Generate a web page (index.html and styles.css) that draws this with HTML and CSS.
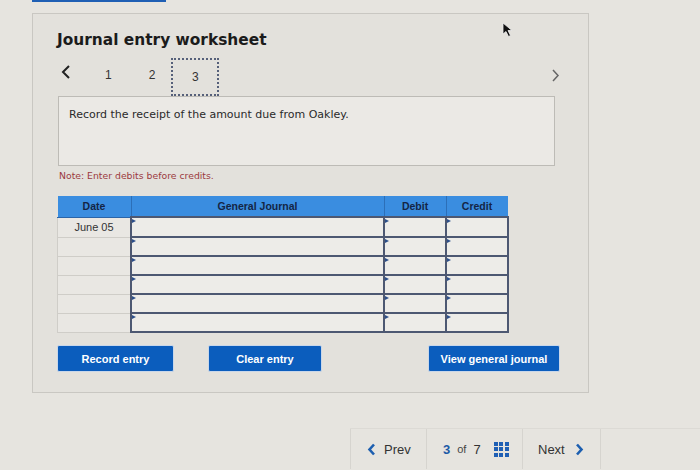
FILE: index.html
```html
<!DOCTYPE html>
<html>
<head>
<meta charset="utf-8">
<link rel="stylesheet" href="styles.css">
</head>
<body>
<div class="topbar"></div>
<div class="panel">
  <h1 class="title">Journal entry worksheet</h1>
  <div class="tabs">
    <svg class="chev-left" width="10" height="14" viewBox="0 0 10 14"><polyline points="8,1 2,7 8,13" fill="none" stroke="#222" stroke-width="2"/></svg>
    <span class="tab tab1">1</span>
    <span class="tab tab2">2</span>
    <span class="tab tab3">3</span>
    <svg class="chev-right" width="9" height="13" viewBox="0 0 9 13"><polyline points="2,1 7,6.5 2,12" fill="none" stroke="#666" stroke-width="1.5"/></svg>
  </div>
  <div class="prompt">Record the receipt of the amount due from Oakley.</div>
  <div class="note">Note: Enter debits before credits.</div>
  <table class="journal">
    <thead>
      <tr><th class="c-date">Date</th><th class="c-gj">General Journal</th><th class="c-deb">Debit</th><th class="c-cred">Credit</th></tr>
    </thead>
    <tbody>
      <tr class="first"><td class="date">June 05</td><td class="in"></td><td class="in"></td><td class="in"></td></tr>
      <tr><td class="date"></td><td class="in"></td><td class="in"></td><td class="in"></td></tr>
      <tr><td class="date"></td><td class="in"></td><td class="in"></td><td class="in"></td></tr>
      <tr><td class="date"></td><td class="in"></td><td class="in"></td><td class="in"></td></tr>
      <tr><td class="date"></td><td class="in"></td><td class="in"></td><td class="in"></td></tr>
      <tr><td class="date"></td><td class="in"></td><td class="in"></td><td class="in"></td></tr>
    </tbody>
  </table>
  <div class="actions">
    <button class="btn btn-record">Record entry</button>
    <button class="btn btn-clear">Clear entry</button>
    <button class="btn btn-view">View general journal</button>
  </div>
</div>
<div class="footer">
  <div class="fcell prev">
    <svg width="9" height="13" viewBox="0 0 9 13"><polyline points="7,1.5 2.5,6.5 7,11.5" fill="none" stroke="#1d5fb0" stroke-width="2.6"/></svg>
    <span>Prev</span>
  </div>
  <div class="fcell pages">
    <span class="cur">3</span><span class="of">of</span><span class="tot">7</span>
    <span class="grid"><i></i><i></i><i></i><i></i><i></i><i></i><i></i><i></i><i></i></span>
  </div>
  <div class="fcell next">
    <span>Next</span>
    <svg width="9" height="13" viewBox="0 0 9 13"><polyline points="2,1.5 6.5,6.5 2,11.5" fill="none" stroke="#1d5fb0" stroke-width="2.6"/></svg>
  </div>
  <div class="fcell last"></div>
</div>
<svg class="cursor" width="12" height="16" viewBox="0 0 12 16"><path d="M1 1 L1 12 L4 9.5 L6.5 14.5 L8.5 13.5 L6 8.5 L10 8.5 Z" fill="#111" stroke="#eee" stroke-width="0.8"/></svg>
</body>
</html>
```

FILE: styles.css
```css
html, body {
  margin: 0;
  padding: 0;
}
body {
  width: 700px;
  height: 470px;
  background: #e6e4df;
  font-family: "Liberation Sans", Arial, sans-serif;
  position: relative;
  overflow: hidden;
}
.topbar {
  margin-left: 32px;
  width: 134px;
  height: 2px;
  background: #1f5fb4;
}
.panel {
  margin: 11px 0 0 32px;
  width: 557px;
  height: 380px;
  border: 1px solid #c9c7c2;
  background: #e3e1dc;
  padding: 0 0 0 24px;
  box-sizing: border-box;
  display: flex;
  flex-direction: column;
}
.title {
  margin: 16px 0 0 0;
  font-family: "DejaVu Sans", Verdana, sans-serif;
  font-weight: bold;
  font-size: 15.4px;
  line-height: 20px;
  color: #1b1b1b;
}
.tabs {
  display: flex;
  align-items: flex-start;
  height: 38px;
  margin-top: 8px;
  position: relative;
}
.chev-left {
  margin-left: 4px;
  margin-top: 7px;
}
.tab {
  font-size: 12px;
  line-height: 14px;
  color: #333;
  text-align: center;
  margin-top: 10px;
}
.tab1 { margin-left: 34px; }
.tab2 { margin-left: 37px; }
.tab3 {
  margin-left: 16px;
  margin-top: 0;
  width: 48px;
  height: 38px;
  padding-top: 10px;
  box-sizing: border-box;
  border: 2px dotted #56607a;
}
.chev-right {
  margin-left: auto;
  margin-right: 28px;
  margin-top: 11px;
}
.prompt {
  margin-left: 1px;
  width: 497px;
  height: 70px;
  box-sizing: border-box;
  border: 1px solid #bdbbb6;
  background: #ebe9e5;
  padding: 11px 0 0 10px;
  font-family: "DejaVu Sans", Verdana, sans-serif;
  font-size: 11px;
  color: #2a2a2a;
}
.note {
  margin: 4px 0 0 2px;
  font-family: "DejaVu Sans", Verdana, sans-serif;
  font-size: 9.3px;
  color: #9b3a3f;
  line-height: 12px;
}
.journal {
  margin: 14px 0 0 0;
  border-collapse: collapse;
  table-layout: fixed;
  width: 447px;
}
.journal th {
  background: #3a8de0;
  color: #142545;
  font-size: 10.5px;
  font-weight: bold;
  height: 20px;
  padding: 0;
  border-left: 1px solid #2c6fb8;
  border-bottom: 1px solid #2a64a8;
}
.journal th:first-child { border-left: none; }
.c-date { width: 73px; }
.c-gj { width: 252px; }
.c-deb { width: 61px; }
.c-cred { width: 61px; }
.journal td {
  height: 17px;
  padding: 0;
}
.journal tr.first td { height: 18px; }
.journal td.date {
  background: #e9e7e3;
  border: 1px solid #cfcdc8;
  font-size: 11px;
  color: #333;
  text-align: center;
}
.journal td.in {
  background: #edece8;
  border: 2px solid #4d5872;
  position: relative;
}
.journal td.in::before {
  content: "";
  position: absolute;
  left: 0;
  top: 1px;
  border-left: 4px solid #2d4f8a;
  border-top: 2.5px solid transparent;
  border-bottom: 2.5px solid transparent;
}
.actions {
  display: flex;
  margin: 12px 0 0 0;
}
.btn {
  height: 27px;
  box-sizing: border-box;
  border: 1px solid #c9d7ea;
  border-radius: 2px;
  background: #0b5dbd;
  color: #fff;
  font-family: "Liberation Sans", Arial, sans-serif;
  font-weight: bold;
  font-size: 11px;
  padding: 0;
}
.btn-record { width: 117px; }
.btn-clear { width: 114px; margin-left: 34px; }
.btn-view { width: 132px; margin-left: 106px; }
.footer {
  margin: 35px 0 0 350px;
  height: 40px;
  display: flex;
  border-top: 1px solid #dcdad5;
}
.fcell {
  display: flex;
  align-items: center;
  border-left: 1px solid #d6d4cf;
  font-size: 13px;
  color: #333;
}
.prev {
  width: 76px;
  padding-left: 16px;
  box-sizing: border-box;
  gap: 8px;
}
.pages {
  width: 96px;
  padding-left: 16px;
  box-sizing: border-box;
}
.cur { color: #1d5aa6; font-weight: bold; }
.of { font-size: 11px; margin: 0 7px 0 7px; color: #444; }
.grid {
  margin-left: 13px;
  display: grid;
  grid-template-columns: repeat(3, 4px);
  grid-auto-rows: 4px;
  gap: 1.5px;
}
.grid i {
  display: block;
  background: #1f5fb4;
}
.next {
  width: 78px;
  padding-left: 15px;
  box-sizing: border-box;
  gap: 10px;
}
.last { width: 50px; }
.cursor {
  position: absolute;
  left: 502px;
  top: 22px;
}
```
